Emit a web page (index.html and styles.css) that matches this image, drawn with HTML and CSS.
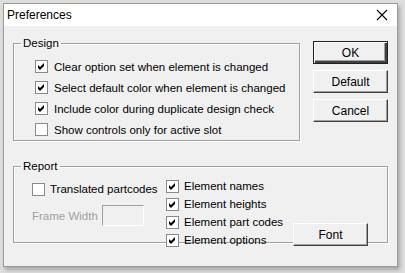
FILE: index.html
```html
<!DOCTYPE html>
<html>
<head>
<meta charset="utf-8">
<link rel="stylesheet" href="styles.css">
</head>
<body>
<div class="window">
  <div class="titlebar">
    <span class="title">Preferences</span>
    <svg class="close" width="12" height="12" viewBox="0 0 12 12"><path d="M1 1 L11 11 M11 1 L1 11" stroke="#000" stroke-width="1.1" fill="none"/></svg>
  </div>
  <div class="client">
    <div class="top-row">
      <fieldset class="group design">
        <legend>Design</legend>
        <div class="rows">
          <label class="row"><span class="cb"><svg width="11" height="11" viewBox="0 0 11 11"><path d="M2 4 L4 6 L8 2 L8 5 L4 9 L2 7 Z" fill="#000"/></svg></span>Clear option set when element is changed</label>
          <label class="row"><span class="cb"><svg width="11" height="11" viewBox="0 0 11 11"><path d="M2 4 L4 6 L8 2 L8 5 L4 9 L2 7 Z" fill="#000"/></svg></span>Select default color when element is changed</label>
          <label class="row"><span class="cb"><svg width="11" height="11" viewBox="0 0 11 11"><path d="M2 4 L4 6 L8 2 L8 5 L4 9 L2 7 Z" fill="#000"/></svg></span>Include color during duplicate design check</label>
          <label class="row"><span class="cb"></span>Show controls only for active slot</label>
        </div>
      </fieldset>
      <div class="buttons">
        <button class="btn default-btn">OK</button>
        <button class="btn">Default</button>
        <button class="btn">Cancel</button>
      </div>
    </div>
    <fieldset class="group report">
      <legend>Report</legend>
      <div class="report-body">
        <div class="col-left">
          <label class="row-s trans"><span class="cb"></span>Translated partcodes</label>
          <div class="frame">
            <span class="disabled">Frame Width</span>
            <span class="input"></span>
          </div>
        </div>
        <div class="col-mid">
          <label class="row-s"><span class="cb"><svg width="11" height="11" viewBox="0 0 11 11"><path d="M2 4 L4 6 L8 2 L8 5 L4 9 L2 7 Z" fill="#000"/></svg></span>Element names</label>
          <label class="row-s"><span class="cb"><svg width="11" height="11" viewBox="0 0 11 11"><path d="M2 4 L4 6 L8 2 L8 5 L4 9 L2 7 Z" fill="#000"/></svg></span>Element heights</label>
          <label class="row-s"><span class="cb"><svg width="11" height="11" viewBox="0 0 11 11"><path d="M2 4 L4 6 L8 2 L8 5 L4 9 L2 7 Z" fill="#000"/></svg></span>Element part codes</label>
          <label class="row-s"><span class="cb"><svg width="11" height="11" viewBox="0 0 11 11"><path d="M2 4 L4 6 L8 2 L8 5 L4 9 L2 7 Z" fill="#000"/></svg></span>Element options</label>
        </div>
        <div class="col-right">
          <button class="btn">Font</button>
        </div>
      </div>
    </fieldset>
  </div>
</div>
</body>
</html>
```

FILE: styles.css
```css
html, body {
  margin: 0;
  padding: 0;
}
body {
  background: #dedede;
  width: 405px;
  height: 273px;
  overflow: hidden;
  font-family: "Liberation Sans", Arial, sans-serif;
  font-size: 11.5px;
  color: #000;
}
.window {
  margin: 3px 0 0 3px;
  width: 393px;
  height: 262px;
  border: 1px solid #9a9a9a;
  background: #f0f0f0;
  box-shadow: 2px 3px 4px rgba(0,0,0,0.25);
  display: flex;
  flex-direction: column;
}
.titlebar {
  height: 22px;
  background: #fff;
  display: flex;
  align-items: center;
  justify-content: space-between;
  padding: 0 9px 0 3px;
}
.title {
  font-size: 12px;
  line-height: 14px;
}
.close {
  display: block;
}
.client {
  flex: 1;
  padding: 10px 9px 0 9px;
  display: flex;
  flex-direction: column;
}
.top-row {
  display: flex;
  gap: 13px;
}
.group {
  margin: 0;
  padding: 0;
  border: 1px solid #a0a0a0;
  box-shadow: inset 1px 1px #fff, 1px 1px #fff;
  min-width: 0;
}
.group legend {
  padding: 0 2px;
  margin-left: 7px;
  line-height: 14px;
}
.design {
  width: 286px;
  height: 103px;
}
.rows {
  padding: 6px 0 0 21px;
  display: flex;
  flex-direction: column;
}
.row {
  height: 21px;
  display: flex;
  align-items: center;
  gap: 6px;
}
.cb {
  width: 11px;
  height: 11px;
  background: #fff;
  border: 1px solid #8a8a8a;
  display: flex;
  align-items: center;
  justify-content: center;
  flex: none;
}
.cb svg { display: block; }
.buttons {
  margin-top: 5px;
  display: flex;
  flex-direction: column;
  gap: 6px;
}
.btn {
  width: 75px;
  height: 23px;
  padding: 0;
  margin: 0;
  font-family: "Liberation Sans", Arial, sans-serif;
  font-size: 12px;
  color: #000;
  background: #f0f0f0;
  border: 1px solid;
  border-color: #fff #404040 #404040 #fff;
  box-shadow: inset -1px -1px #a0a0a0;
}
.default-btn {
  border: 1px solid #202020;
  box-shadow: inset 1px 1px #fff, inset -2px -2px #404040, inset -3px -3px #a0a0a0;
}
.report {
  margin-top: 18px;
  width: 373px;
  height: 82px;
}
.report-body {
  display: flex;
  padding: 4px 0 0 18px;
}
.col-left {
  width: 134px;
  display: flex;
  flex-direction: column;
}
.row-s {
  height: 18px;
  display: flex;
  align-items: center;
  gap: 5px;
}
.trans {
  margin-top: 3px;
}
.frame {
  margin-top: 7px;
  display: flex;
  align-items: center;
  gap: 4px;
}
.disabled {
  color: #a0a0a0;
}
.input {
  width: 40px;
  height: 19px;
  border: 1px solid;
  border-color: #a0a0a0 #fff #fff #a0a0a0;
  background: #f0f0f0;
}
.col-mid {
  width: 127px;
  display: flex;
  flex-direction: column;
}
.col-right {
  display: flex;
  align-items: flex-end;
  padding-bottom: 3px;
}
```
